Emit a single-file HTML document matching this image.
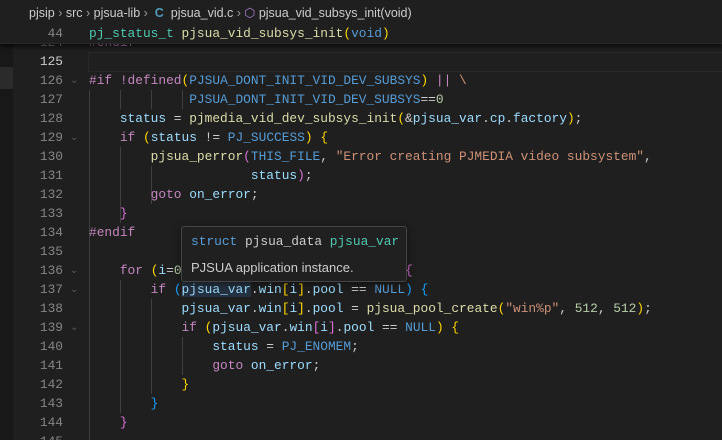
<!DOCTYPE html>
<html style="margin:0;width:722px;height:440px;overflow:hidden"><head><style>
body{margin:0;width:722px;height:440px;background:#1f1f1f;overflow:hidden;position:relative;font-family:"Liberation Mono",monospace;}
.side{position:absolute;left:0;top:0;width:13px;height:440px;background:#181818}
.sel{position:absolute;left:0;top:67px;width:13px;height:22px;background:#2b2b2b}
.bc{position:absolute;left:0;top:0;width:722px;height:24px;background:#1f1f1f;font-family:"Liberation Sans",sans-serif;font-size:12.5px;color:#cccccc;line-height:26px;white-space:pre}
.bc .in{position:absolute;left:29px;top:0}
.l{position:absolute;left:0;height:19px;line-height:19px;font-size:12.85px;white-space:pre;width:722px}
.n{position:absolute;left:30px;width:33px;text-align:right;color:#858585}
.c{position:absolute;left:89px;color:#cccccc}
.f{position:absolute;left:70px;color:#5a5a5a;font-family:"DejaVu Sans",sans-serif;font-size:10px}
.k{color:#c586c0}.m{color:#569cd6}.fn{color:#dcdcaa}.v{color:#9cdcfe}.s{color:#ce9178}.nu{color:#b5cea8}.t{color:#4ec9b0}
.g{color:#ffd700}.p{color:#da70d6}.b{color:#179fff}
.guide{position:absolute;width:1px;background:#404040}
.sticky{position:absolute;left:0;top:24px;width:722px;height:19px;background:#1f1f1f;box-shadow:0 3px 4px rgba(0,0,0,.6);border-bottom:1px solid #2a2a2a}
.cur{position:absolute;left:88px;top:52px;width:634px;height:18px;border:1px solid #282828;border-right:none}
.tip{position:absolute;left:181px;top:226px;width:224px;height:54px;background:#202020;border:1px solid #454545;border-radius:3px;box-shadow:0 2px 8px rgba(0,0,0,.5)}
.tip .a{position:absolute;left:9px;top:5px;font-size:12.85px;line-height:19px;white-space:pre;color:#cccccc}
.tip .d{position:absolute;left:9px;top:33px;font-family:"Liberation Sans",sans-serif;font-size:13px;color:#cccccc;white-space:pre}
</style></head><body>
<div class="side"></div><div class="sel"></div>
<div class="guide" style="left:89px;top:90px;height:350px"></div>
<div class="guide" style="left:120px;top:90px;height:19px"></div>
<div class="guide" style="left:151px;top:90px;height:19px"></div>
<div class="guide" style="left:182px;top:90px;height:19px"></div>
<div class="guide" style="left:120px;top:147px;height:76px"></div>
<div class="guide" style="left:151px;top:166px;height:38px"></div>
<div class="guide" style="left:120px;top:280px;height:133px"></div>
<div class="guide" style="left:151px;top:299px;height:95px"></div>
<div class="guide" style="left:182px;top:337px;height:38px"></div>
<div class="cur"></div>
<div class="l" style="top:33px"><span class="n">124</span><span class="c"><span class="k">#endif</span></span></div>
<div class="l" style="top:52px"><span class="n" style="color:#cccccc">125</span></div>
<div class="l" style="top:71px"><span class="n">126</span><span class="f">⌄</span><span class="c"><span class="k">#if</span> <span class="k">!defined</span><span class="g">(</span><span class="m">PJSUA_DONT_INIT_VID_DEV_SUBSYS</span><span class="g">)</span> <span class="k">||</span> <span class="s">\</span></span></div>
<div class="l" style="top:90px"><span class="n">127</span><span class="c">             <span class="m">PJSUA_DONT_INIT_VID_DEV_SUBSYS</span>==<span class="nu">0</span></span></div>
<div class="l" style="top:109px"><span class="n">128</span><span class="c">    <span class="v">status</span> = <span class="fn">pjmedia_vid_dev_subsys_init</span><span class="g">(</span>&amp;<span class="v">pjsua_var</span>.<span class="v">cp</span>.<span class="v">factory</span><span class="g">)</span>;</span></div>
<div class="l" style="top:128px"><span class="n">129</span><span class="f">⌄</span><span class="c">    <span class="k">if</span> <span class="g">(</span><span class="v">status</span> != <span class="m">PJ_SUCCESS</span><span class="g">)</span> <span class="g">{</span></span></div>
<div class="l" style="top:147px"><span class="n">130</span><span class="c">        <span class="fn">pjsua_perror</span><span class="p">(</span><span class="m">THIS_FILE</span>, <span class="s">"Error creating PJMEDIA video subsystem"</span>,</span></div>
<div class="l" style="top:166px"><span class="n">131</span><span class="c">                     <span class="v">status</span><span class="p">)</span>;</span></div>
<div class="l" style="top:185px"><span class="n">132</span><span class="c">        <span class="k">goto</span> <span class="v">on_error</span>;</span></div>
<div class="l" style="top:204px"><span class="n">133</span><span class="c">    <span class="p">}</span></span></div>
<div class="l" style="top:223px"><span class="n">134</span><span class="c"><span class="k">#endif</span></span></div>
<div class="l" style="top:242px"><span class="n">135</span></div>
<div class="l" style="top:261px"><span class="n">136</span><span class="f">⌄</span><span class="c">    <span class="k">for</span> <span class="g">(</span><span class="v">i</span>=<span class="nu">0</span>; <span class="v">i</span>&lt;<span class="m">PJSUA_MAX_VID_WINS</span>; ++<span class="v">i</span><span class="g">)</span> <span class="p">{</span></span></div>
<div class="l" style="top:280px"><span class="n">137</span><span class="f">⌄</span><span class="c">        <span class="k">if</span> <span class="b">(</span><span class="v" style="background:#243140">pjsua_var</span>.<span class="v">win</span><span class="g">[</span><span class="v">i</span><span class="g">]</span>.<span class="v">pool</span> == <span class="m">NULL</span><span class="b">)</span> <span class="b">{</span></span></div>
<div class="l" style="top:299px"><span class="n">138</span><span class="c">            <span class="v">pjsua_var</span>.<span class="v">win</span><span class="g">[</span><span class="v">i</span><span class="g">]</span>.<span class="v">pool</span> = <span class="fn">pjsua_pool_create</span><span class="g">(</span><span class="s">"win%p"</span>, <span class="nu">512</span>, <span class="nu">512</span><span class="g">)</span>;</span></div>
<div class="l" style="top:318px"><span class="n">139</span><span class="f">⌄</span><span class="c">            <span class="k">if</span> <span class="g">(</span><span class="v">pjsua_var</span>.<span class="v">win</span><span class="p">[</span><span class="v">i</span><span class="p">]</span>.<span class="v">pool</span> == <span class="m">NULL</span><span class="g">)</span> <span class="g">{</span></span></div>
<div class="l" style="top:337px"><span class="n">140</span><span class="c">                <span class="v">status</span> = <span class="m">PJ_ENOMEM</span>;</span></div>
<div class="l" style="top:356px"><span class="n">141</span><span class="c">                <span class="k">goto</span> <span class="v">on_error</span>;</span></div>
<div class="l" style="top:375px"><span class="n">142</span><span class="c">            <span class="g">}</span></span></div>
<div class="l" style="top:394px"><span class="n">143</span><span class="c">        <span class="b">}</span></span></div>
<div class="l" style="top:413px"><span class="n">144</span><span class="c">    <span class="p">}</span></span></div>
<div class="l" style="top:432px;height:8px;overflow:hidden"><span class="n">145</span></div>
<div class="sticky"><div class="l" style="top:0"><span class="n">44</span><span class="c"><span class="t">pj_status_t</span> <span class="fn">pjsua_vid_subsys_init</span><span class="g">(</span><span class="m">void</span><span class="g">)</span></span></div></div>
<div class="bc"><span class="in">pjsip <span style="color:#999">›</span> src <span style="color:#999">›</span> pjsua-lib <span style="color:#999">›</span>  <b style="color:#519aba">C</b>  pjsua_vid.c <span style="color:#999">›</span> <span style="color:#b180d7">⬡</span> pjsua_vid_subsys_init(void)</span></div>
<div class="tip"><div class="a"><span class="m">struct</span> pjsua_data <span class="t">pjsua_var</span></div><div class="d">PJSUA application instance.</div></div>
</body></html>
